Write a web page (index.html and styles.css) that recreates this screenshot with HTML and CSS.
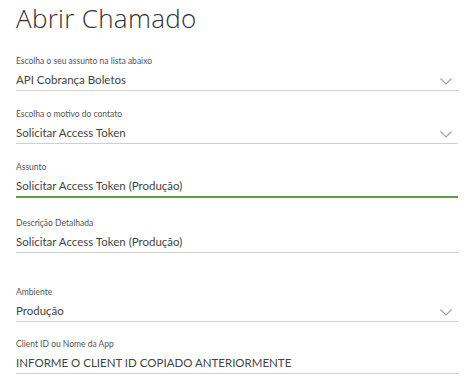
FILE: index.html
```html
<!DOCTYPE html>
<html lang="pt-BR">
<head>
<meta charset="utf-8">
<title>Abrir Chamado</title>
<link rel="stylesheet" href="styles.css">
</head>
<body>
<div class="page">
  <h1 class="title">Abrir Chamado</h1>
  <div class="field f1">
    <div class="label">Escolha o seu assunto na lista abaixo</div>
    <div class="control">
      <span class="value">API Cobrança Boletos</span>
      <svg class="chev" width="12" height="7" viewBox="0 0 12 7"><path d="M0.5 0.5 L6 6 L11.5 0.5" fill="none" stroke="#9aa58f" stroke-width="1.1"/></svg>
    </div>
  </div>
  <div class="field f2">
    <div class="label">Escolha o motivo do contato</div>
    <div class="control">
      <span class="value">Solicitar Access Token</span>
      <svg class="chev" width="12" height="7" viewBox="0 0 12 7"><path d="M0.5 0.5 L6 6 L11.5 0.5" fill="none" stroke="#9aa58f" stroke-width="1.1"/></svg>
    </div>
  </div>
  <div class="field f3">
    <div class="label">Assunto</div>
    <div class="control focused">
      <span class="value">Solicitar Access Token (Produção)</span>
    </div>
  </div>
  <div class="field f4">
    <div class="label">Descrição Detalhada</div>
    <div class="control">
      <span class="value">Solicitar Access Token (Produção)</span>
    </div>
  </div>
  <div class="field f5">
    <div class="label">Ambiente</div>
    <div class="control">
      <span class="value">Produção</span>
      <svg class="chev" width="12" height="7" viewBox="0 0 12 7"><path d="M0.5 0.5 L6 6 L11.5 0.5" fill="none" stroke="#9aa58f" stroke-width="1.1"/></svg>
    </div>
  </div>
  <div class="field f6">
    <div class="label">Client ID ou Nome da App</div>
    <div class="control">
      <span class="value">INFORME O CLIENT ID COPIADO ANTERIORMENTE</span>
    </div>
  </div>
</div>
</body>
</html>
```
FILE: styles.css
```css
html, body {
  margin: 0;
  padding: 0;
  background: #ffffff;
}
body {
  font-family: Lato, "Open Sans", sans-serif;
  color: #333333;
}
.page {
  width: 442px;
  padding-left: 16px;
  padding-top: 1px;
}
.title {
  margin: 0;
  font-family: "Open Sans", sans-serif;
  font-weight: 300;
  font-size: 26px;
  line-height: 34px;
  color: #333333;
  letter-spacing: 0.3px;
}
.field {
  display: flex;
  flex-direction: column;
}
.f1 { margin-top: 20px; }
.f2 { margin-top: 17px; }
.f3 { margin-top: 17px; }
.f4 { margin-top: 19px; }
.f5 { margin-top: 33px; }
.f6 { margin-top: 16px; }
.label {
  font-size: 8.5px;
  line-height: 12px;
  color: #555555;
  margin-bottom: 4px;
}
.control {
  display: flex;
  align-items: center;
  justify-content: space-between;
  height: 18px;
  padding-bottom: 1px;
  border-bottom: 1.5px solid #cfcfcf;
}
.control.focused {
  border-bottom: 2px solid #5aa03c;
}
.value {
  font-size: 11.5px;
  line-height: 16px;
  color: #444444;
}
.chev {
  margin-right: 6px;
  margin-top: 3px;
}
```
